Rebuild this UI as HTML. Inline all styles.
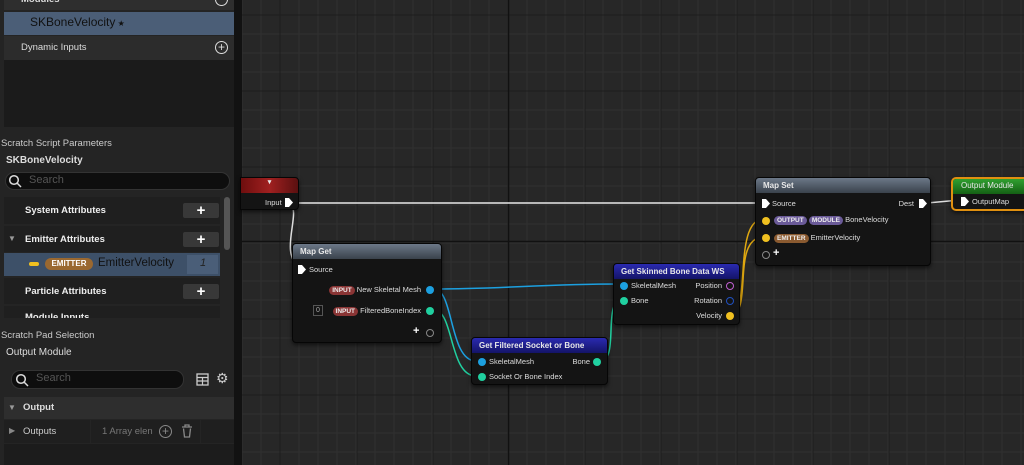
<!DOCTYPE html>
<html><head><meta charset="utf-8"><style>
*{margin:0;padding:0;box-sizing:border-box}
body{width:1024px;height:465px;overflow:hidden;background:#242424;font-family:"Liberation Sans",sans-serif;color:#c8c8c8;position:relative}
.a{position:absolute}
.t{position:absolute;white-space:nowrap}
.plus{position:absolute;width:36px;height:15px;background:#383838;border-radius:2px;color:#fff;font-weight:bold;font-size:15px;line-height:15px;text-align:center}
.node{position:absolute;background:#141414;border:1px solid #060606;border-radius:4px;box-shadow:0 2px 4px rgba(0,0,0,.6);font-size:7.5px;color:#ddd}
.hd{height:15px;border-radius:3px 3px 0 0;font-size:8px;color:#e8e8e8;padding:3px 7px;font-weight:bold}
.pill{display:inline-block;border-radius:6px;padding:0 3px;font-size:6.5px;font-weight:bold;color:#eee;line-height:9px}
.r{position:absolute;white-space:nowrap;text-align:right}
</style></head><body>
<!-- left panel -->
<div class="a" style="left:0;top:0;width:236px;height:465px;background:#242424"></div>
<div class="a" style="left:4px;top:0;width:230px;height:10px;background:#2e2e2e;overflow:hidden"><div class="t" style="left:17px;top:-6px;font-size:9.5px;color:#ddd;font-weight:bold">Modules</div><div class="a" style="left:211px;top:-7px;width:13px;height:13px;border:1.3px solid #ddd;border-radius:50%"></div></div>
<div class="a" style="left:4px;top:12px;width:230px;height:23px;background:#4b5e77"></div>
<div class="t" style="left:30px;top:15px;font-size:12px;color:#111">SKBoneVelocity<span style="font-size:8px"> ★</span></div>
<div class="a" style="left:4px;top:36px;width:230px;height:24px;background:#2c2c2c"></div>
<div class="t" style="left:21px;top:42px;font-size:9.5px;color:#ddd">Dynamic Inputs</div>
<div class="a" style="left:215px;top:41px;width:13px;height:13px;border:1.3px solid #ddd;border-radius:50%;color:#ddd;font-size:12px;line-height:10px;text-align:center">+</div>
<div class="a" style="left:4px;top:60px;width:230px;height:67px;background:#1b1b1b"></div>
<div class="t" style="left:1px;top:138px;font-size:9.5px;color:#ccc">Scratch Script Parameters</div>
<div class="t" style="left:6px;top:155px;font-size:10px;color:#ddd;font-weight:bold">SKBoneVelocity</div>
<div class="a" style="left:5px;top:172px;width:225px;height:18px;background:#0e0e0e;border-radius:9px;border:1px solid #333"></div>
<svg class="a" style="left:8px;top:174px" width="14" height="14"><circle cx="6" cy="6" r="4.3" stroke="#ddd" stroke-width="1.5" fill="none"/><path d="M9 9l4 4" stroke="#ddd" stroke-width="1.5"/></svg>
<div class="t" style="left:29px;top:174px;font-size:11px;color:#555">Search</div>
<div class="a" style="left:4px;top:197px;width:216px;height:27px;background:#1f1f1f"></div>
<div class="t" style="left:25px;top:205px;font-size:9.5px;color:#eee;font-weight:bold">System Attributes</div>
<div class="plus" style="left:183px;top:203px">+</div>
<div class="a" style="left:4px;top:226px;width:216px;height:26px;background:#1f1f1f"></div>
<div class="t" style="left:8px;top:234px;font-size:8px;color:#999">▼</div>
<div class="t" style="left:25px;top:234px;font-size:9.5px;color:#eee;font-weight:bold">Emitter Attributes</div>
<div class="plus" style="left:183px;top:232px">+</div>
<div class="a" style="left:4px;top:253px;width:216px;height:23px;background:#3d5068"></div>
<div class="a" style="left:29px;top:262px;width:10px;height:4px;background:#f0c020;border-radius:2px"></div>
<div class="a" style="left:45px;top:258px;width:48px;height:12px;background:#9a6830;border-radius:6px;font-size:8px;color:#fff;font-weight:bold;text-align:center;line-height:12px">EMITTER</div>
<div class="t" style="left:98px;top:257px;font-size:11.5px;color:#111">EmitterVelocity</div>
<div class="a" style="left:187px;top:255px;width:31px;height:19px;background:#4a5e78"></div>
<div class="t" style="left:200px;top:257px;font-size:11px;color:#222;font-style:italic">1</div>
<div class="a" style="left:4px;top:278px;width:216px;height:26px;background:#1f1f1f"></div>
<div class="t" style="left:25px;top:286px;font-size:9.5px;color:#eee;font-weight:bold">Particle Attributes</div>
<div class="plus" style="left:183px;top:284px">+</div>
<div class="a" style="left:4px;top:306px;width:216px;height:12px;background:#1f1f1f;overflow:hidden"><div class="t" style="left:21px;top:6px;font-size:9.5px;color:#eee;font-weight:bold">Module Inputs</div></div>
<div class="a" style="left:224px;top:197px;width:6px;height:53px;background:#555;border-radius:3px"></div>
<div class="a" style="left:0;top:321px;width:236px;height:144px;background:#242424"></div>
<div class="t" style="left:1px;top:330px;font-size:9.5px;color:#ccc">Scratch Pad Selection</div>
<div class="t" style="left:6px;top:347px;font-size:10px;color:#ddd">Output Module</div>
<div class="a" style="left:11px;top:370px;width:173px;height:19px;background:#0e0e0e;border-radius:9px;border:1px solid #333"></div>
<svg class="a" style="left:15px;top:373px" width="14" height="14"><circle cx="6" cy="6" r="4.3" stroke="#ddd" stroke-width="1.5" fill="none"/><path d="M9 9l4 4" stroke="#ddd" stroke-width="1.5"/></svg>
<div class="t" style="left:36px;top:372px;font-size:11px;color:#555">Search</div>
<svg class="a" style="left:196px;top:373px" width="13" height="13"><rect x="1" y="1" width="11" height="11" fill="none" stroke="#ccc" stroke-width="1.3"/><path d="M1 4.5h11M1 8h11M6.5 4.5v7.5" stroke="#ccc" stroke-width="1.2"/></svg>
<div class="t" style="left:216px;top:370px;font-size:14px;color:#ccc">⚙</div>
<div class="a" style="left:4px;top:397px;width:230px;height:22px;background:#2e2e2e"></div>
<div class="t" style="left:8px;top:403px;font-size:8px;color:#999">▼</div>
<div class="t" style="left:23px;top:402px;font-size:9.5px;color:#ddd;font-weight:bold">Output</div>
<div class="a" style="left:4px;top:420px;width:86px;height:23px;background:#1f1f1f"></div>
<div class="a" style="left:91px;top:420px;width:109px;height:23px;background:#1f1f1f"></div>
<div class="a" style="left:201px;top:420px;width:33px;height:23px;background:#1f1f1f"></div>
<div class="t" style="left:9px;top:426px;font-size:8px;color:#888">▶</div>
<div class="t" style="left:23px;top:426px;font-size:9.5px;color:#ccc">Outputs</div>
<div class="t" style="left:102px;top:426px;font-size:9.5px;color:#777">1 Array elen</div>
<div class="a" style="left:159px;top:425px;width:13px;height:13px;border:1.3px solid #888;border-radius:50%;color:#888;font-size:12px;line-height:10px;text-align:center">+</div>
<svg class="a" style="left:181px;top:424px" width="12" height="14"><path d="M1 3h10M4 3V1h4v2M2.5 4.5l1 8.5h5l1-8.5" stroke="#888" fill="none" stroke-width="1.3"/></svg>
<div class="a" style="left:4px;top:444px;width:230px;height:21px;background:#1c1c1c"></div>
<div class="a" style="left:234px;top:0;width:8px;height:465px;background:#121212"></div>
<!-- graph -->
<svg class="a" style="left:242px;top:0" width="782" height="465">
<defs>
<pattern id="mi" x="-242" y="0" width="19" height="19" patternUnits="userSpaceOnUse"><rect width="19" height="19" fill="#272727"/><path d="M14 0v19M0 15h19" stroke="#313131" stroke-width="1"/></pattern>
</defs>
<rect width="782" height="465" fill="url(#mi)"/>
<g stroke="#1e1e1e" stroke-width="1">
<path d="M38 0v465M115 0v465M191 0v465M343 0v465M419 0v465M495 0v465M571 0v465M647 0v465M723 0v465M0 15h782M0 91h782M0 167h782M0 319h782M0 395h782"/>
</g>
<path d="M266.5 0v465M0 241.5h782" stroke="#111" stroke-width="1.5"/>
<g fill="none" stroke-width="1.5">
<path d="M50 203H520" stroke="#e8e8e8"/>
<path d="M48 203c12 10 -12 50 10 65" stroke="#ddd"/>
<path d="M685 203L718 200" stroke="#ddd"/>
<path d="M192 289C260 289 300 284 378 284" stroke="#1ca0e0"/>
<path d="M192 289c20 0 15 72 42 72" stroke="#1ca0e0"/>
<path d="M192 310c20 0 15 66 42 66" stroke="#20d0a0"/>
<path d="M358 361c20 0 2 -61 22 -61" stroke="#20d0a0"/>
<path d="M488 315c22 0 2 -96 34 -96" stroke="#e0a810"/>
<path d="M488 315c24 0 0 -78 34 -78" stroke="#e0a810"/>
</g>
</svg>
<!-- red node -->
<div class="node" style="left:240px;top:177px;width:59px;height:33px;border-radius:0 4px 4px 0">
<div class="hd" style="height:15px;background:linear-gradient(90deg,#6e0e0e,#a02020 50%,#5a1010);border-radius:0 3px 0 0;text-align:center;padding:0;font-size:7px">▾</div>
<div class="t" style="left:24px;top:20px">Input</div>
<svg class="a" style="left:44px;top:20px" width="8" height="9"><path d="M0 0h4l4 4.5-4 4.5H0z" fill="#fff"/></svg>
</div>
<!-- map get -->
<div class="node" style="left:292px;top:243px;width:150px;height:100px">
<div class="hd" style="background:linear-gradient(180deg,#6c7888,#3a424c)">Map Get</div>
<svg class="a" style="left:5px;top:21px" width="8" height="9"><path d="M0 0h4l4 4.5-4 4.5H0z" fill="#fff"/></svg>
<div class="t" style="left:16px;top:21px">Source</div>
<div class="r" style="right:20px;top:41px"><span class="pill" style="background:#8a3535">INPUT</span> New Skeletal Mesh</div>
<div class="a" style="left:133px;top:42px;width:8px;height:8px;border-radius:50%;background:#1ca0e0"></div>
<div class="a" style="left:20px;top:61px;width:10px;height:11px;border:1px solid #555;font-size:7px;text-align:center;line-height:9px;color:#aaa">0</div>
<div class="r" style="right:20px;top:62px"><span class="pill" style="background:#8a3535">INPUT</span> FilteredBoneIndex</div>
<div class="a" style="left:133px;top:63px;width:8px;height:8px;border-radius:50%;background:#20d0a0"></div>
<div class="t" style="left:120px;top:81px;font-size:11px;color:#fff;font-weight:bold">+</div>
<div class="a" style="left:133px;top:85px;width:8px;height:8px;border-radius:50%;border:1.3px solid #888"></div>
</div>
<!-- get filtered -->
<div class="node" style="left:471px;top:337px;width:137px;height:48px">
<div class="hd" style="background:linear-gradient(180deg,#2a2ab0,#141468)">Get Filtered Socket or Bone</div>
<div class="a" style="left:6px;top:20px;width:8px;height:8px;border-radius:50%;background:#1ca0e0"></div>
<div class="t" style="left:17px;top:19px">SkeletalMesh</div>
<div class="r" style="right:17px;top:19px">Bone</div>
<div class="a" style="left:121px;top:20px;width:8px;height:8px;border-radius:50%;background:#20d0a0"></div>
<div class="a" style="left:6px;top:35px;width:8px;height:8px;border-radius:50%;background:#20d0a0"></div>
<div class="t" style="left:17px;top:34px">Socket Or Bone Index</div>
</div>
<!-- skinned -->
<div class="node" style="left:613px;top:263px;width:127px;height:62px">
<div class="hd" style="background:linear-gradient(180deg,#2a2ab0,#141468)">Get Skinned Bone Data WS</div>
<div class="a" style="left:6px;top:18px;width:8px;height:8px;border-radius:50%;background:#1ca0e0"></div>
<div class="t" style="left:17px;top:17px">SkeletalMesh</div>
<div class="r" style="right:17px;top:17px">Position</div>
<div class="a" style="left:112px;top:18px;width:8px;height:8px;border-radius:50%;border:1.5px solid #c060d0"></div>
<div class="a" style="left:6px;top:33px;width:8px;height:8px;border-radius:50%;background:#20d0a0"></div>
<div class="t" style="left:17px;top:32px">Bone</div>
<div class="r" style="right:17px;top:32px">Rotation</div>
<div class="a" style="left:112px;top:33px;width:8px;height:8px;border-radius:50%;border:1.5px solid #2050c0"></div>
<div class="r" style="right:17px;top:47px">Velocity</div>
<div class="a" style="left:112px;top:48px;width:8px;height:8px;border-radius:50%;background:#f0c020"></div>
</div>
<!-- map set -->
<div class="node" style="left:755px;top:177px;width:176px;height:89px">
<div class="hd" style="background:linear-gradient(180deg,#6c7888,#3a424c)">Map Set</div>
<svg class="a" style="left:6px;top:21px" width="8" height="9"><path d="M0 0h4l4 4.5-4 4.5H0z" fill="#fff"/></svg>
<div class="t" style="left:16px;top:21px">Source</div>
<div class="r" style="right:16px;top:21px">Dest</div>
<svg class="a" style="left:163px;top:21px" width="8" height="9"><path d="M0 0h4l4 4.5-4 4.5H0z" fill="#fff"/></svg>
<div class="a" style="left:6px;top:39px;width:8px;height:8px;border-radius:50%;background:#f0c020"></div>
<div class="t" style="left:18px;top:37px"><span class="pill" style="background:#6a5a98">OUTPUT</span> <span class="pill" style="background:#6a5a98">MODULE</span> BoneVelocity</div>
<div class="a" style="left:6px;top:56px;width:8px;height:8px;border-radius:50%;background:#f0c020"></div>
<div class="t" style="left:18px;top:55px"><span class="pill" style="background:#8a5a30">EMITTER</span> EmitterVelocity</div>
<div class="a" style="left:6px;top:73px;width:8px;height:8px;border-radius:50%;border:1.3px solid #888"></div>
<div class="t" style="left:17px;top:69px;font-size:11px;color:#fff;font-weight:bold">+</div>
</div>
<!-- output module -->
<div class="node" style="left:951px;top:177px;width:80px;height:34px;border:2px solid #e09010;border-radius:5px">
<div class="hd" style="background:linear-gradient(180deg,#30a030,#146014);font-weight:normal;padding:2px 8px">Output Module</div>
<svg class="a" style="left:8px;top:18px" width="8" height="9"><path d="M0 0h4l4 4.5-4 4.5H0z" fill="#fff"/></svg>
<div class="t" style="left:19px;top:18px">OutputMap</div>
</div>
</body></html>
